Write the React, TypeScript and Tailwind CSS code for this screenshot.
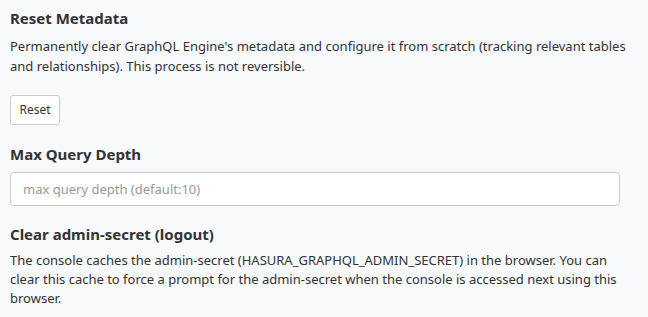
import React from "react";

export default function App() {
  return (
    <div className="w-[648px] h-[317px] bg-[#f8f9fb] text-[#333333] overflow-hidden px-[10px]" style={{ fontFamily: '"Noto Sans", "Open Sans", sans-serif' }}>
      <div className="pt-[7px]">
        <h4 className="text-[15px] font-bold leading-[22px]">Reset Metadata</h4>
        <p className="mt-[7px] text-[13px] leading-[20px] w-[620px]">
          Permanently clear GraphQL Engine's metadata and configure it from scratch (tracking relevant tables and relationships). This process is not reversible.
        </p>
        <button className="mt-[19px] h-[30px] w-[50px] bg-white border border-[#cccccc] rounded-[3px] text-[12px] text-[#333333]">
          Reset
        </button>
      </div>
      <div className="mt-[18px]">
        <h4 className="text-[15px] font-bold leading-[22px]">Max Query Depth</h4>
        <input
          className="mt-[7px] w-[610px] h-[34px] bg-white border border-[#cccccc] rounded-[4px] px-[12px] text-[13px] placeholder:text-[#999999] outline-none"
          placeholder="max query depth (default:10)"
        />
      </div>
      <div className="mt-[17px]">
        <h4 className="text-[15px] font-bold leading-[22px]">Clear admin-secret (logout)</h4>
        <p className="mt-[6px] text-[13px] leading-[19px] w-[620px]">
          The console caches the admin-secret (HASURA_GRAPHQL_ADMIN_SECRET) in the browser. You can clear this cache to force a prompt for the admin-secret when the console is accessed next using this browser.
        </p>
      </div>
    </div>
  );
}
